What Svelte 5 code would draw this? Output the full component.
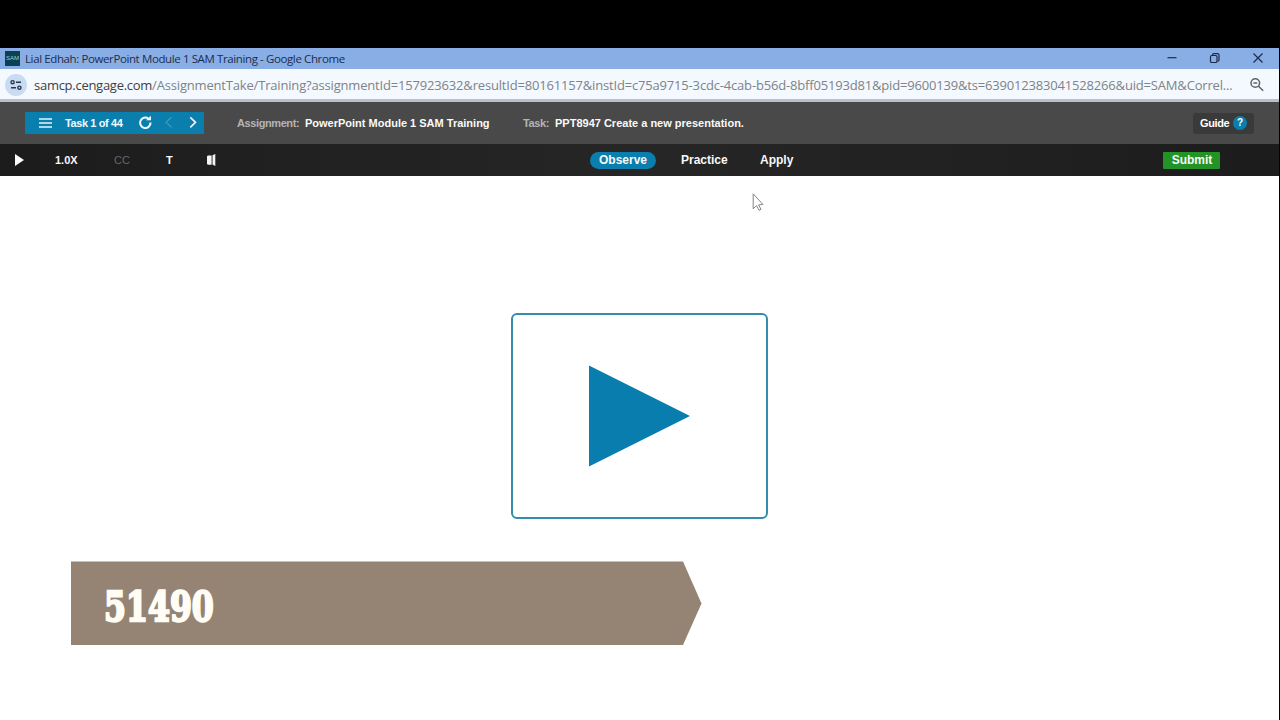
<script>
  const site = 'samcp.cengage.com';
  const path = '/AssignmentTake/Training?assignmentId=157923632&resultId=80161157&instId=c75a9715-3cdc-4cab-b56d-8bff05193d81&pid=9600139&ts=639012383041528266&uid=SAM&Correl...';
</script>

<div class="screen">
  <div class="window">
    <header class="titlebar">
      <span class="favicon">SAM</span>
      <span class="title">Lial Edhah: PowerPoint Module 1 SAM Training - Google Chrome</span>
      <svg class="controls" width="100" height="21" viewBox="0 0 100 21" fill="none" stroke="#1c2b48" stroke-width="1.2">
        <path d="M2.5 9.7h9" />
        <rect x="45.500" y="7.500" width="6.500" height="7" rx="1.300" />
        <path d="M47.500 7.300v-.3q0-1.300 1.500-1.300h3.500q1.500 0 1.500 1.500v4.500q0 1.400-1.400 1.600" />
        <path d="M88.500 5.500l9 9M97.500 5.500l-9 9" />
      </svg>
    </header>

    <div class="address">
      <span class="siteinfo">
        <svg width="14" height="14" viewBox="0 0 14 14" fill="none" stroke="#27384a" stroke-width="1.400">
          <circle cx="3.600" cy="4.200" r="1.600" /><path d="M7 4.200h5M2 9.700h5" /><circle cx="10.400" cy="9.700" r="1.600" />
        </svg>
      </span>
      <span class="url"><b>{site}</b>{path}</span>
      <svg class="lens" width="16" height="16" viewBox="0 0 16 16" fill="none" stroke="#5d6469" stroke-width="1.500">
        <circle cx="6.300" cy="6" r="4.300" /><path d="M9.500 9.200l4.700 4.600M4.400 6h3.800" />
      </svg>
    </div>

    <div class="taskbar">
      <div class="tasknav">
        <svg class="burger" width="13" height="11" viewBox="0 0 13 11" stroke="#e4f6fc" stroke-width="1.300"><path d="M0 1h13M0 5h13M0 9h13" /></svg>
        <span class="taskno">Task 1 of 44</span>
        <svg class="arrows" width="62" height="20" viewBox="0 0 62 20" fill="none">
          <path d="M10.500 5.700A5.200 5.200 0 1 0 12.500 9.500" stroke="#f2fbff" stroke-width="2" />
          <path d="M8 7.300h5V2.800z" fill="#f2fbff" />
          <path d="M33.500 4.200l-5.500 5 5.500 5" stroke="#3d9bc0" stroke-width="1.200" />
          <path d="M52.300 4.300l5.200 5-5.200 5" stroke="#f2fbff" stroke-width="1.600" />
        </svg>
      </div>
      <span class="label assignment">Assignment:</span>
      <span class="value module">PowerPoint Module 1 SAM Training</span>
      <span class="label task">Task:</span>
      <span class="value taskname">PPT8947 Create a new presentation.</span>
      <div class="guide"><span>Guide</span><i>?</i></div>
    </div>

    <div class="playbar">
      <svg class="play" width="9" height="12" viewBox="0 0 9 12"><path d="M0 0l9 6-9 6z" fill="#fff" /></svg>
      <span class="speed">1.0X</span>
      <span class="cc">CC</span>
      <span class="transcript">T</span>
      <svg class="sound" width="9" height="12" viewBox="0 0 9 12" fill="#f5f5f5"><path d="M0 2.200l1-.7h3.600v9.300H1L0 10z" /><path d="M5.500 1.300L8.300 0v12l-2.800-1.500z" /></svg>
      <span class="mode observe">Observe</span>
      <span class="mode practice">Practice</span>
      <span class="mode apply">Apply</span>
      <span class="submit">Submit</span>
    </div>

    <main>
      <div class="player">
        <svg width="102" height="102" viewBox="0 0 102 102"><path d="M0 .5L101 51 0 101.500z" fill="#097eae" /></svg>
      </div>
      <div class="banner"><span>51490</span></div>
      <svg class="cursor" width="12" height="19" viewBox="0 0 12 19"><path d="M1.200.8v15l3.300-3.200 2.500 4.700 2-1-2.400-4.400 4.300-.5z" fill="#fff" stroke="#858585" stroke-width="1" /></svg>
    </main>
  </div>
</div>

<style>
  :global(body) { margin: 0; background: #000; }
  .screen { width: 1280px; height: 720px; box-sizing: border-box; padding-top: 48px; background: #000; overflow: hidden; }
  .window { width: 1279px; height: 672px; display: flex; flex-direction: column; font-family: "Liberation Sans", Arial, sans-serif; white-space: nowrap; }
  .window > * { flex: none; }
  svg { display: block; flex: none; }

  .titlebar { height: 21px; background: #89ade5; display: flex; align-items: center; }
  .favicon { width: 15px; height: 15px; margin-left: 5px; background: #0a4155; color: #a9cccb; font-size: 6px; line-height: 15px; text-align: center; }
  .title { margin-left: 5px; font: 11.500px/20px "Open Sans", sans-serif; color: #1b2e50; letter-spacing: -.39px; }
  .controls { margin-left: auto; margin-right: 14px; }

  .address { height: 33px; box-sizing: border-box; background: #f4f9ff; border-bottom: 3px solid #b9c3c7; display: flex; align-items: center; }
  .siteinfo { width: 22px; height: 22px; margin: 2px 0 0 5px; border-radius: 50%; background: #c9daf3; display: flex; align-items: center; justify-content: center; }
  .url { margin: 2px 0 0 7px; width: 1200px; font: 13px/20px "Open Sans", sans-serif; color: #7d8387; letter-spacing: -.177px; }
  .url b { font-weight: 400; color: #3b4145; letter-spacing: -.27px; }
  .lens { margin: 1px 0 0 15px; }

  .taskbar { height: 42px; background: #494949; display: flex; align-items: center; font-size: 11px; font-weight: 700; }
  .tasknav { width: 179px; height: 22px; margin-left: 25px; border-radius: 1px; background: #0a7fad; display: flex; align-items: center; }
  .burger { margin-left: 14px; }
  .taskno { width: 58px; margin-left: 13px; color: #eefaff; letter-spacing: -.4px; }
  .arrows { margin-left: 15px; }
  .label { color: #b4b4b4; letter-spacing: -.4px; }
  .value { color: #fafafa; }
  .assignment { width: 62px; margin-left: 33px; }
  .module { width: 185px; margin-left: 6px; }
  .task { width: 26px; margin-left: 33px; }
  .taskname { margin-left: 6px; }
  .guide { width: 61px; height: 21px; margin-left: auto; margin-right: 25px; border-radius: 3px; background: #3a3a3a; display: flex; align-items: center; color: #fff; }
  .guide span { width: 29px; margin-left: 7px; letter-spacing: -.4px; }
  .guide i { width: 14px; height: 14px; margin-left: 4px; border-radius: 50%; background: #0a7fad; font: 700 10px/14px "Liberation Sans", sans-serif; text-align: center; }

  .playbar { height: 32px; background: linear-gradient(90deg, #1c1c1c, #262626 50%, #1c1c1c); display: flex; align-items: center; color: #f8f8f8; font-size: 11px; font-weight: 700; }
  .play { margin-left: 15px; }
  .speed { width: 23px; margin-left: 31px; }
  .cc { width: 16px; margin-left: 36px; color: #666; font-weight: 400; }
  .transcript { width: 7px; margin-left: 36px; }
  .sound { margin-left: 34px; }
  .mode { font-size: 12px; }
  .observe { width: 66px; height: 17px; margin-left: 374px; border-radius: 9px; background: #0a7fad; line-height: 17px; text-align: center; }
  .practice { width: 47px; margin-left: 25px; }
  .apply { width: 34px; margin-left: 32px; }
  .submit { width: 57px; height: 17px; margin-left: auto; margin-right: 59px; border-radius: 1px; background: #249327; font-size: 12px; line-height: 17px; text-align: center; text-indent: 1px; }

  main { position: relative; box-sizing: border-box; height: 544px; padding-top: 137px; background: #fff; }
  .player { width: 257px; height: 206px; box-sizing: border-box; margin: 0 0 0 511px; border: 2px solid #368da7; border-radius: 6px; display: flex; align-items: center; padding-left: 76px; }
  .banner { width: 631px; height: 84px; margin: 42px 0 0 71px; background: #958474; clip-path: polygon(0 .5px, 612px .5px, 630.500px 50.500%, 612px 100%, 0 100%); display: flex; align-items: center; }
  .banner span { margin: 7px 0 0 33px; font-family: "DejaVu Serif", serif; font-weight: 700; font-size: 41px; line-height: 50px; color: #fffdf5; -webkit-text-stroke: 2.400px #fffdf5; transform: scaleX(.77); transform-origin: left center; }
  .cursor { position: absolute; left: 752px; top: 17px; }
</style>
